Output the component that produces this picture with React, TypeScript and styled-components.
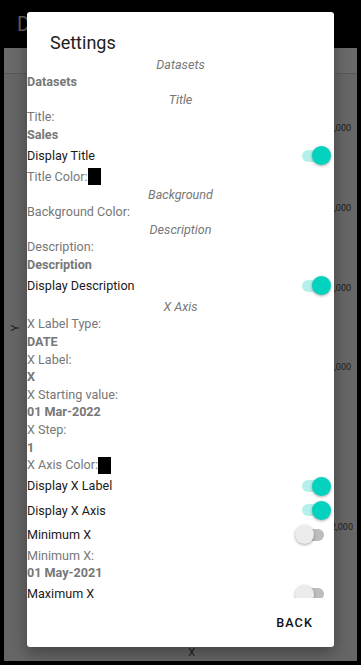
import React from "react";
import styled, { createGlobalStyle } from "styled-components";

type Row =
  | { kind: "section"; text: string }
  | { kind: "label"; text: string }
  | { kind: "value"; text: string }
  | { kind: "toggle"; text: string; on: boolean }
  | { kind: "color"; text: string; color: string };

const rows: Row[] = [
  { kind: "section", text: "Datasets" },
  { kind: "value", text: "Datasets" },
  { kind: "section", text: "Title" },
  { kind: "label", text: "Title:" },
  { kind: "value", text: "Sales" },
  { kind: "toggle", text: "Display Title", on: true },
  { kind: "color", text: "Title Color:", color: "#000" },
  { kind: "section", text: "Background" },
  { kind: "label", text: "Background Color:" },
  { kind: "section", text: "Description" },
  { kind: "label", text: "Description:" },
  { kind: "value", text: "Description" },
  { kind: "toggle", text: "Display Description", on: true },
  { kind: "section", text: "X Axis" },
  { kind: "label", text: "X Label Type:" },
  { kind: "value", text: "DATE" },
  { kind: "label", text: "X Label:" },
  { kind: "value", text: "X" },
  { kind: "label", text: "X Starting value:" },
  { kind: "value", text: "01 Mar-2022" },
  { kind: "label", text: "X Step:" },
  { kind: "value", text: "1" },
  { kind: "color", text: "X Axis Color:", color: "#000" },
  { kind: "toggle", text: "Display X Label", on: true },
  { kind: "toggle", text: "Display X Axis", on: true },
  { kind: "toggle", text: "Minimum X", on: false },
  { kind: "label", text: "Minimum X:" },
  { kind: "value", text: "01 May-2021" },
  { kind: "toggle", text: "Maximum X", on: false },
];

// chart tick labels behind the dialog (centre y in page coords)
const ticks = [
  { y: 128, text: "10,000", right: 351 },
  { y: 208, text: "10,000", right: 351 },
  { y: 288, text: "10,000", right: 351 },
  { y: 367, text: "10,000", right: 351 },
  { y: 527, text: "2,000", right: 353 },
];

const GlobalStyle = createGlobalStyle`
  html, body {
    margin: 0;
    padding: 0;
    background: #000;
  }
  body {
    font-family: Roboto, "Noto Sans", sans-serif;
  }
`;

const Page = styled.div`
  position: relative;
  width: 361px;
  height: 665px;
  overflow: hidden;
  background: #000;
  display: flex;
  flex-direction: column;
`;

const AppBar = styled.div`
  height: 48px;
  flex-shrink: 0;
  display: flex;
  align-items: center;
  padding-left: 17px;
  color: #5f5f5f;
  font-size: 20px;
`;

const Body = styled.div`
  flex: 1;
  margin: 0 4px 4px;
  background: #666;
  display: flex;
  flex-direction: column;
`;

const TabStrip = styled.div`
  height: 25px;
  flex-shrink: 0;
  background: #6a6a6a;
  border-bottom: 1px solid #585858;
`;

const Chart = styled.svg`
  flex: 1;
  display: block;
  font-family: Roboto, sans-serif;
`;

const Dialog = styled.div`
  position: absolute;
  left: 27px;
  top: 12px;
  width: 307px;
  height: 635px;
  background: #fff;
  border-radius: 3px;
  box-shadow: 0 6px 16px rgba(0, 0, 0, 0.35);
  display: flex;
  flex-direction: column;
`;

const DialogTitle = styled.div`
  height: 42px;
  flex-shrink: 0;
  box-sizing: border-box;
  padding: 20px 0 0 23px;
  font-size: 18px;
  line-height: 22px;
  color: #212121;
`;

const Scroll = styled.div`
  flex: 1;
  overflow: hidden;
  padding-top: 1.5px;
  font-size: 12.6px;
  line-height: 17.6px;
`;

const SectionHeader = styled.div`
  text-align: center;
  font-style: italic;
  color: #777;
`;

const FieldText = styled.div<{ $bold?: boolean }>`
  color: #777;
  font-weight: ${(p) => (p.$bold ? 700 : 400)};
`;

const ToggleRow = styled.div`
  height: 24.2px;
  display: flex;
  align-items: center;
  justify-content: space-between;
  color: #1a1a1a;
`;

const ColorRow = styled.div`
  height: 18px;
  display: flex;
  align-items: center;
  color: #777;
`;

const Swatch = styled.span<{ $color: string }>`
  width: 13px;
  height: 17px;
  background: ${(p) => p.$color};
`;

const SwitchBox = styled.span`
  position: relative;
  width: 38px;
  height: 24px;
  margin-right: 2px;
  flex-shrink: 0;
`;

const Track = styled.span<{ $on: boolean }>`
  position: absolute;
  left: 8px;
  top: 6px;
  width: 22px;
  height: 12px;
  border-radius: 6px;
  background: ${(p) => (p.$on ? "#b5f1ea" : "#bdbdbd")};
`;

const Thumb = styled.span<{ $on: boolean }>`
  position: absolute;
  top: 2.5px;
  left: ${(p) => (p.$on ? "18px" : "1px")};
  width: 19px;
  height: 19px;
  border-radius: 50%;
  background: ${(p) => (p.$on ? "#03d2bf" : "#ececec")};
  box-shadow: 0 1px 3px rgba(0, 0, 0, 0.35);
`;

const ButtonBar = styled.div`
  height: 49px;
  flex-shrink: 0;
  box-sizing: border-box;
  padding: 6px 13px 0 0;
  display: flex;
  justify-content: flex-end;
  align-items: flex-start;
`;

const BackButton = styled.button`
  height: 36px;
  padding: 0 8px;
  border: none;
  background: none;
  font-family: Roboto, sans-serif;
  font-weight: 500;
  font-size: 12.6px;
  letter-spacing: 1.1px;
  color: #111;
  text-transform: uppercase;
`;

const Switch = ({ on }: { on: boolean }) => (
  <SwitchBox>
    <Track $on={on} />
    <Thumb $on={on} />
  </SwitchBox>
);

const renderRow = (row: Row, i: number) => {
  switch (row.kind) {
    case "section":
      return <SectionHeader key={i}>{row.text}</SectionHeader>;
    case "label":
      return <FieldText key={i}>{row.text}</FieldText>;
    case "value":
      return (
        <FieldText key={i} $bold>
          {row.text}
        </FieldText>
      );
    case "toggle":
      return (
        <ToggleRow key={i}>
          <span>{row.text}</span>
          <Switch on={row.on} />
        </ToggleRow>
      );
    case "color":
      return (
        <ColorRow key={i}>
          <span>{row.text}</span>
          <Swatch $color={row.color} />
        </ColorRow>
      );
  }
};

export default function App() {
  // chart svg starts at page x=4, y=74
  const ox = 4;
  const oy = 74;
  return (
    <>
      <GlobalStyle />
      <Page>
        <AppBar>D</AppBar>
        <Body>
          <TabStrip />
          <Chart width="353" height="587">
            {ticks.map((t, i) => (
              <text
                key={i}
                x={t.right - ox}
                y={t.y - oy + 3.2}
                textAnchor="end"
                fontSize="9"
                fill="#1c1c1c"
              >
                {t.text}
              </text>
            ))}
            <text
              x={0}
              y={0}
              fontSize="11"
              fill="#1c1c1c"
              textAnchor="middle"
              transform={`translate(${19 - ox} ${328 - oy}) rotate(-90)`}
            >
              Y
            </text>
            <text
              x={191.7 - ox}
              y={655.5 - oy}
              fontSize="11"
              fill="#1c1c1c"
              textAnchor="middle"
            >
              X
            </text>
          </Chart>
        </Body>

        <Dialog>
          <DialogTitle>Settings</DialogTitle>
          <Scroll>{rows.map(renderRow)}</Scroll>
          <ButtonBar>
            <BackButton>Back</BackButton>
          </ButtonBar>
        </Dialog>
      </Page>
    </>
  );
}
